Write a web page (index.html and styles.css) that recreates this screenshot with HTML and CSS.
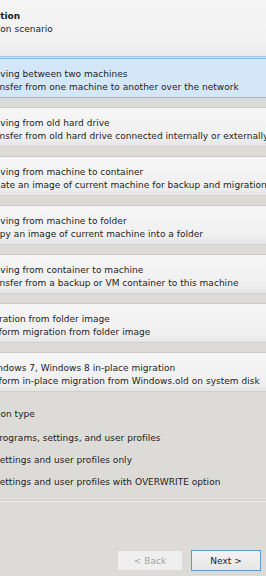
FILE: index.html
```html
<!DOCTYPE html>
<html>
<head>
<meta charset="utf-8">
<link rel="stylesheet" href="styles.css">
</head>
<body>
<div class="page">
  <header class="head">
    <div class="title">Migration</div>
    <div class="subtitle">Select migration scenario</div>
  </header>
  <div class="list">
    <div class="card selected"><div class="l1">Moving between two machines</div><div class="l2">Transfer from one machine to another over the network</div></div>
    <div class="card"><div class="l1">Moving from old hard drive</div><div class="l2">Transfer from old hard drive connected internally or externally</div></div>
    <div class="card"><div class="l1">Moving from machine to container</div><div class="l2 c2">Create an image of current machine for backup and migration</div></div>
    <div class="card"><div class="l1">Moving from machine to folder</div><div class="l2 c3">Copy an image of current machine into a folder</div></div>
    <div class="card"><div class="l1">Moving from container to machine</div><div class="l2">Transfer from a backup or VM container to this machine</div></div>
    <div class="card"><div class="l1 c4">Migration from folder image</div><div class="l2 c5">Perform migration from folder image</div></div>
    <div class="card"><div class="l1 c6">Windows 7, Windows 8 in-place migration</div><div class="l2 c5">Perform in-place migration from Windows.old on system disk</div></div>
  </div>
  <div class="types">
    <div class="group">Migration type</div>
    <div class="opt">Programs, settings, and user profiles</div>
    <div class="opt">Settings and user profiles only</div>
    <div class="opt">Settings and user profiles with OVERWRITE option</div>
  </div>
  <div class="sep"></div>
  <div class="buttons">
    <div class="btn back">&lt; Back</div>
    <div class="btn next">Next &gt;</div>
  </div>
</div>
</body>
</html>
```
FILE: styles.css
```css
html, body {
  margin: 0;
  padding: 0;
  width: 266px;
  height: 576px;
  overflow: hidden;
  background: #dcdbd7;
  font-family: "DejaVu Sans", sans-serif;
  font-size: 9px;
  letter-spacing: 0.03px;
  color: #1c1c1c;
}
.page {
  width: 266px;
  height: 576px;
  display: flex;
  flex-direction: column;
  overflow: hidden;
}
.head {
  height: 57px;
  box-sizing: border-box;
  padding-top: 10px;
  background: linear-gradient(#f5f5f5, #f2f2f2 70%, #eaeaea);
  border-bottom: 1px solid #a9c4dc;
}
.title {
  font-weight: bold;
  line-height: 13px;
  margin-left: -29px;
}
.subtitle {
  line-height: 13px;
  margin-left: -63px;
}
.list {
  display: flex;
  flex-direction: column;
  gap: 9px;
  padding-top: 1px;
}
.card {
  height: 40px;
  box-sizing: border-box;
  padding-top: 9px;
  background: linear-gradient(#f6f6f6, #efefef 80%, #e4e4e4);
  border-top: 1px solid #c9c9c9;
  border-bottom: 1px solid #d0d0d0;
  line-height: 13px;
  white-space: nowrap;
}
.card.selected {
  background: #d3e7f8;
  border: 1px solid #8dbbe3;
  border-left: none;
  border-right: none;
}
.l1 { margin-left: -13px; }
.l2 { margin-left: -14px; }
.c2 { margin-left: -15px; }
.c3 { margin-left: -12px; }
.c4 { margin-left: -17px; }
.c5 { margin-left: -16px; }
.c6 { margin-left: -14px; }
.types {
  padding-top: 15px;
  line-height: 22px;
  white-space: nowrap;
}
.group { margin-left: -31px; line-height: 14px; padding-bottom: 6px; }
.opt { margin-left: -6px; }
.sep {
  margin-top: 7px;
  height: 0;
  border-top: 1px solid #d0cec9;
  border-bottom: 1px solid #f0efec;
}
.buttons {
  margin-top: auto;
  margin-bottom: 5px;
  display: flex;
  justify-content: flex-end;
  gap: 8px;
  padding-right: 5px;
}
.btn {
  height: 21px;
  box-sizing: border-box;
  display: flex;
  align-items: center;
  justify-content: center;
}
.back {
  width: 66px;
  background: #efefef;
  border: 1px solid #dadada;
  color: #a3a3a3;
}
.next {
  width: 70px;
  background: linear-gradient(#f3f3f3, #e6e6e6);
  border: 1px solid #5f9ad0;
  color: #1c1c1c;
}
```
